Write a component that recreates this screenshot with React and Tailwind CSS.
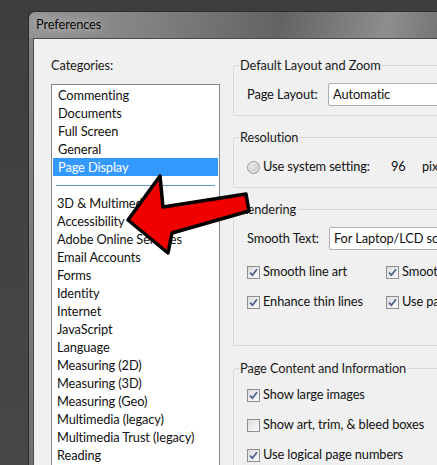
import React from "react";

const categoriesTop = ["Commenting", "Documents", "Full Screen", "General", "Page Display"];
const categoriesBottom = [
  "3D & Multimedia",
  "Accessibility",
  "Adobe Online Services",
  "Email Accounts",
  "Forms",
  "Identity",
  "Internet",
  "JavaScript",
  "Language",
  "Measuring (2D)",
  "Measuring (3D)",
  "Measuring (Geo)",
  "Multimedia (legacy)",
  "Multimedia Trust (legacy)",
  "Reading",
];

function CheckBox({ checked }) {
  return (
    <span className="w-[13px] h-[13px] shrink-0 border border-[#8f8f8f] bg-[linear-gradient(135deg,#dcdcdc,#fbfbfb)] flex items-center justify-center">
      {checked && (
        <svg width="9" height="9" viewBox="0 0 9 9">
          <path d="M1 4.6 L3.4 7.2 L8 1.2" fill="none" stroke="#4b5f8a" strokeWidth="1.7" />
        </svg>
      )}
    </span>
  );
}

function Radio() {
  return (
    <span className="w-[13px] h-[13px] shrink-0 rounded-full border border-[#9a9a9a] bg-[radial-gradient(circle_at_40%_40%,#f4f4f4,#cfcfcf)] flex items-center justify-center">
      <span className="w-[7px] h-[7px] rounded-full bg-[radial-gradient(circle_at_40%_40%,#e9e9e9,#c4c4c4)]" />
    </span>
  );
}

function Group({ title, className, children }) {
  return (
    <fieldset className={"border border-[#d5d9dc] rounded-[3px] " + className}>
      <legend className="ml-[5px] px-[1px] leading-[18px] text-[#1a1a1a]">{title}</legend>
      <div className="pl-[13px]">{children}</div>
    </fieldset>
  );
}

function Select({ value }) {
  return (
    <div className="flex-1 h-[23px] border border-[#abadb3] rounded-[2px] bg-white flex items-center pl-[4px] whitespace-nowrap overflow-hidden">
      {value}
    </div>
  );
}

export default function App() {
  return (
    <div className="relative w-[437px] h-[465px] overflow-hidden bg-[linear-gradient(180deg,#3e3e3e,#474747)] pl-[28px] pt-[11px] font-['Lato','Noto_Sans',sans-serif] text-[12.8px] tracking-[-0.1px] text-[#111]">
      <div className="w-[520px] h-[470px] rounded-tl-[7px] border-l border-t border-[#2c2c2c] bg-[linear-gradient(100deg,#959595_0%,#848484_18%,#636363_42%,#8e8e8e_60%,#666666_74%,#767676_100%)] flex flex-col">
        <div className="h-[26px] flex items-center pl-[7px] text-[12.8px] text-[#0a0a0a]">
          <span className="[text-shadow:0_0_8px_#dcdcdc]">Preferences</span>
        </div>
        <div className="flex-1 pl-[4px] bg-[linear-gradient(180deg,#858585,#707070)]">
          <div className="h-full border-l border-t border-[#4a4a4a] bg-[#f0f0f0] flex pl-[17px] pt-[17px] gap-[13px]">
            {/* category list */}
            <div className="w-[169px] flex flex-col">
              <div className="leading-[18px] text-[#1a1a1a]">Categories:</div>
              <div className="mt-[10px] flex-1 border border-[#828790] bg-white pt-[1px]">
                {categoriesTop.map((c) => (
                  <div
                    key={c}
                    className={
                      "h-[18px] leading-[18px] pl-[5px] mx-[1px] whitespace-nowrap " +
                      (c === "Page Display" ? "bg-[#3399ff] text-white" : "text-[#111]")
                    }
                  >
                    {c}
                  </div>
                ))}
                <div className="h-[18px] flex items-center px-[4px]">
                  <div className="flex-1 h-px bg-[#5d9ad6]" />
                </div>
                {categoriesBottom.map((c) => (
                  <div key={c} className="h-[18px] leading-[18px] pl-[5px] whitespace-nowrap">
                    {c}
                  </div>
                ))}
              </div>
            </div>

            {/* settings groups */}
            <div className="w-[290px] flex flex-col">
              <Group title="Default Layout and Zoom" className="pt-[9px] pb-[9px]">
                <div className="flex items-center">
                  <span className="w-[81px]">Page Layout:</span>
                  <Select value="Automatic" />
                </div>
              </Group>

              <Group title="Resolution" className="mt-[12px] pt-[12px] pb-[11px]">
                <div className="h-[18px] flex items-center">
                  <Radio />
                  <span className="ml-[3px] w-[128px]">Use system setting:</span>
                  <span className="w-[31px]">96</span>
                  <span>pixels/inch</span>
                </div>
              </Group>

              <Group title="Rendering" className="mt-[12px] pt-[9px] pb-[34px]">
                <div className="flex items-center">
                  <span className="w-[82px]">Smooth Text:</span>
                  <Select value="For Laptop/LCD screens" />
                </div>
                <div className="mt-[13px] h-[18px] flex items-center">
                  <div className="w-[139px] flex items-center">
                    <CheckBox checked />
                    <span className="ml-[3px]">Smooth line art</span>
                  </div>
                  <CheckBox checked />
                  <span className="ml-[3px] whitespace-nowrap">Smooth images</span>
                </div>
                <div className="mt-[12px] h-[18px] flex items-center">
                  <div className="w-[139px] flex items-center">
                    <CheckBox checked />
                    <span className="ml-[3px]">Enhance thin lines</span>
                  </div>
                  <CheckBox checked />
                  <span className="ml-[3px] whitespace-nowrap">Use page cache</span>
                </div>
              </Group>

              <Group title="Page Content and Information" className="mt-[13px] pt-[9px] flex-1">
                <div className="h-[18px] flex items-center">
                  <CheckBox checked />
                  <span className="ml-[3px]">Show large images</span>
                </div>
                <div className="mt-[12px] h-[18px] flex items-center">
                  <CheckBox />
                  <span className="ml-[3px]">Show art, trim, &amp; bleed boxes</span>
                </div>
                <div className="mt-[12px] h-[18px] flex items-center">
                  <CheckBox checked />
                  <span className="ml-[3px]">Use logical page numbers</span>
                </div>
              </Group>
            </div>
          </div>
        </div>
      </div>

      {/* red callout arrow pointing at Accessibility */}
      <svg
        className="absolute left-0 top-0 pointer-events-none"
        width="437"
        height="465"
        viewBox="0 0 437 465"
      >
        <polygon
          points="128,220 160,176 163,207 246,194 249,211 172,233 168,253"
          fill="#f20000"
          stroke="#000"
          strokeWidth="3.5"
          strokeLinejoin="round"
        />
      </svg>
    </div>
  );
}
